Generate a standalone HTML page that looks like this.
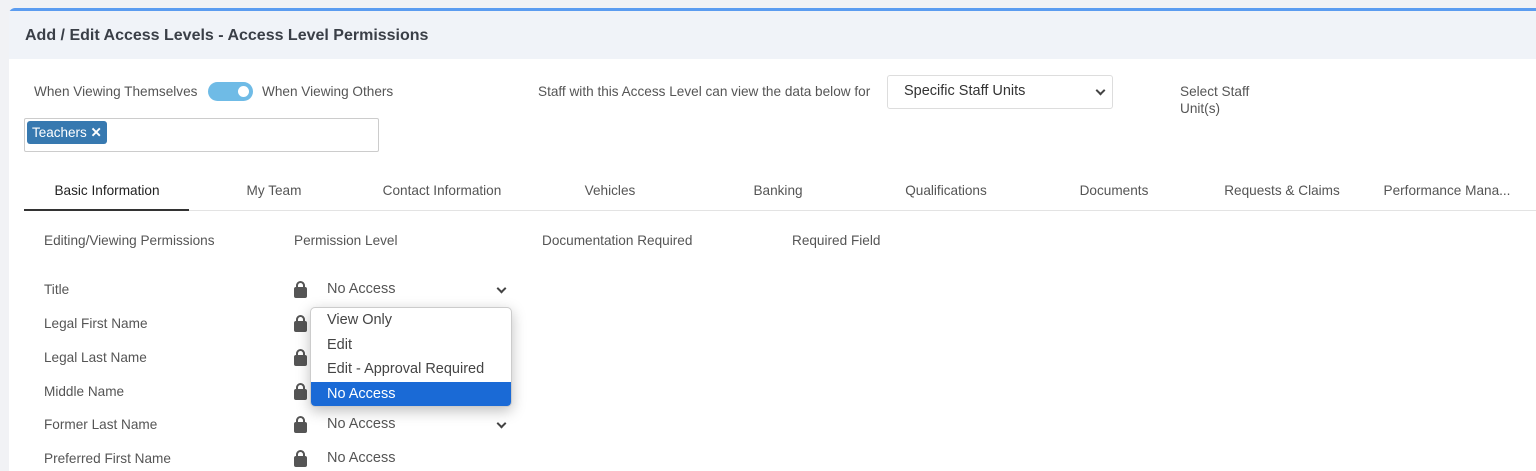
<!DOCTYPE html><html><head><style>
body{margin:0;width:1536px;height:455px;overflow:hidden;background:#f1f2f5;font-family:"Liberation Sans",sans-serif;font-size:13.6px;color:#555;}
.card{position:absolute;left:9px;top:8px;width:1540px;height:460px;background:#fff;border-top:3px solid #5b9cf0;border-radius:6px 0 0 0;}
.hdr{height:48px;background:#f0f3f8;}
.hdr h1{margin:0;position:absolute;left:16px;top:16px;font-size:16px;color:#3a3f47;font-weight:bold}
.a{position:absolute;white-space:nowrap}
.tog{position:absolute;left:208px;top:82px;width:45px;height:19px;border-radius:10px;background:#6fbbe6}
.tog:after{content:"";position:absolute;right:4px;top:4px;width:11px;height:11px;border-radius:50%;background:#fff}
.tag{position:absolute;left:24px;top:118px;width:353px;height:32px;border:1px solid #ccc;border-radius:2px}
.chip{position:absolute;left:2px;top:2px;height:23px;padding:0 5px;background:#3779b0;color:#fff;border-radius:3px;line-height:23px;font-size:13.5px}
.sel{position:absolute;left:887px;top:75px;width:224px;height:32px;border:1px solid #ddd;border-radius:3px;font-size:14.5px;color:#333}
.tab{position:absolute;top:183px;width:168px;text-align:center;color:#555}
.lock{position:absolute;left:294px;width:13px;height:11px;background:#555;border-radius:2px}
.lock:before{content:"";position:absolute;left:2px;top:-6px;width:5px;height:6px;border:2px solid #555;border-bottom:0;border-radius:5px 5px 0 0}
.dd{position:absolute;left:310px;top:307px;width:200px;height:98px;background:#fff;border:1px solid #ccc;border-radius:5px;box-shadow:0 4px 14px rgba(0,0,0,.25);font-size:14.5px;color:#444;overflow:hidden}
.dd div{height:24.5px;line-height:24px;padding-left:16px}
.chev{position:absolute;width:5px;height:5px;border-right:2px solid #444;border-bottom:2px solid #444;transform:rotate(45deg)}
</style></head><body>
<div class="card"><div class="hdr"><h1>Add / Edit Access Levels - Access Level Permissions</h1></div></div>
<div class="a" style="left:34px;top:84px">When Viewing Themselves</div>
<div class="tog"></div>
<div class="a" style="left:262px;top:84px">When Viewing Others</div>
<div class="a" style="left:538px;top:84px">Staff with this Access Level can view the data below for</div>
<div class="sel"><span class="a" style="left:16px;top:7px">Specific Staff Units</span><span class="chev" style="left:209px;top:11px"></span></div>
<div class="a" style="left:1180px;top:83px;line-height:17px">Select Staff<br>Unit(s)</div>
<div class="tag"><div class="chip">Teachers <b>✕</b></div></div>
<div class="a" style="left:24px;top:210px;width:1512px;height:1px;background:#e3e3e3"></div>
<div class="a" style="left:24px;top:209px;width:165px;height:2px;background:#333"></div>
<div class="tab" style="left:23px;color:#222">Basic Information</div>
<div class="tab" style="left:190px">My Team</div>
<div class="tab" style="left:358px">Contact Information</div>
<div class="tab" style="left:526px">Vehicles</div>
<div class="tab" style="left:694px">Banking</div>
<div class="tab" style="left:862px">Qualifications</div>
<div class="tab" style="left:1030px">Documents</div>
<div class="tab" style="left:1198px">Requests &amp; Claims</div>
<div class="tab" style="left:1363px">Performance Mana...</div>
<div class="a" style="left:44px;top:233px">Editing/Viewing Permissions</div>
<div class="a" style="left:294px;top:233px">Permission Level</div>
<div class="a" style="left:542px;top:233px">Documentation Required</div>
<div class="a" style="left:792px;top:233px">Required Field</div>
<div class="a" style="left:44px;top:282px">Title</div>
<div class="a" style="left:44px;top:316px">Legal First Name</div>
<div class="a" style="left:44px;top:350px">Legal Last Name</div>
<div class="a" style="left:44px;top:384px">Middle Name</div>
<div class="a" style="left:44px;top:417px">Former Last Name</div>
<div class="a" style="left:44px;top:451px">Preferred First Name</div>
<div class="lock" style="top:287px"></div><div class="lock" style="top:321px"></div><div class="lock" style="top:355px"></div><div class="lock" style="top:389px"></div><div class="lock" style="top:422px"></div><div class="lock" style="top:456px"></div>
<div class="a" style="left:327px;top:281px;font-size:14.5px">No Access</div><span class="chev" style="left:498px;top:285px"></span>
<div class="a" style="left:327px;top:416px;font-size:14.5px">No Access</div><span class="chev" style="left:498px;top:420px"></span>
<div class="a" style="left:327px;top:450px;font-size:14.5px">No Access</div>
<div class="dd"><div>View Only</div><div>Edit</div><div>Edit - Approval Required</div><div style="background:#1a6ad6;color:#fff">No Access</div></div>
</body></html>
